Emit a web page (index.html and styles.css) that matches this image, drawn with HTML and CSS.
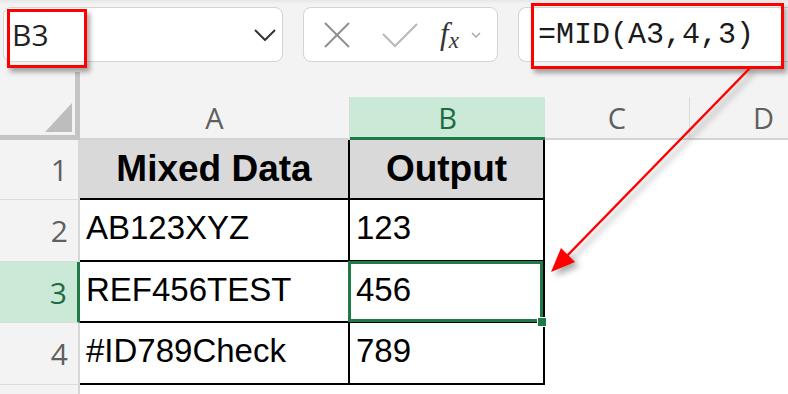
FILE: index.html
```html
<html>

<head>
  <title>MID 函数示例</title>
  <meta charset="utf-8">
  <link rel="stylesheet" href="styles.css">
</head>

<body>
  <div id="toolbar">
    <div class="namebox">
      <span class="ref">B3</span>
      <svg class="drop" viewBox="0 0 22 12"><polyline points="1,1 11,11 21,1" /></svg>
    </div>
    <div class="btns">
      <svg class="cancel" viewBox="0 0 28 28"><line x1="2" y1="2" x2="26" y2="26" /><line x1="26" y1="2" x2="2" y2="26" /></svg>
      <svg class="enter" viewBox="0 0 36 26"><polyline points="1,12 13,24 35,2" /></svg>
      <span class="fx"><i>f</i><em>x</em></span>
      <svg class="more" viewBox="0 0 10 6"><polyline points="1,1 5,5 9,1" /></svg>
    </div>
    <div class="formula">=MID(A3,4,3)</div>
  </div>

  <div id="sheet">
    <div class="corner"><span class="tri"></span></div>
    <div class="col">A</div>
    <div class="col sel">B</div>
    <div class="col">C</div>
    <div class="col cut">D</div>

    <div class="row">1</div>
    <div class="cell head">Mixed Data</div>
    <div class="cell head">Output</div>
    <div class="blank"></div>
    <div class="blank"></div>

    <div class="row">2</div>
    <div class="cell">AB123XYZ</div>
    <div class="cell">123</div>
    <div class="blank"></div>
    <div class="blank"></div>

    <div class="row sel">3</div>
    <div class="cell">REF456TEST</div>
    <div class="cell active">456<span class="handle"></span></div>
    <div class="blank"></div>
    <div class="blank"></div>

    <div class="row">4</div>
    <div class="cell">#ID789Check</div>
    <div class="cell">789</div>
    <div class="blank"></div>
    <div class="blank"></div>

    <div class="row last"></div>
    <div class="blank"></div>
    <div class="blank"></div>
    <div class="blank"></div>
    <div class="blank"></div>
  </div>

  <!-- 红色箭头：公式栏指向 B3 -->
  <svg class="arrow" viewBox="0 0 788 394">
    <line x1="750" y1="68" x2="562" y2="261" />
    <polygon points="551,272 561,248 575,262" />
  </svg>
</body>

</html>
```

FILE: styles.css
```css
* {
  margin: 0;
  padding: 0;
  box-sizing: border-box;
}

body {
  position: relative;
  width: 788px;
  height: 394px;
  overflow: hidden;
  background: #f3f3f3;
  font-family: "Open Sans", "Noto Sans", sans-serif;
}

#toolbar {
  display: flex;
  align-items: flex-start;
  height: 72px;
  padding: 7px 0 0 3px;
  background: linear-gradient(#e6e6e6, #f3f3f3 4px);
}

.namebox,
.btns,
.formula {
  position: relative;
  height: 55px;
  background: #fff;
  border: 1px solid #d4d4d4;
  border-radius: 8px;
  display: flex;
  align-items: center;
}

.namebox {
  width: 280px;
  justify-content: space-between;
  padding: 0 6px 0 8px;
  font-size: 30px;
  color: #222;
}

/* 红色标注框 */
.namebox::before,
.formula::before {
  content: "";
  position: absolute;
  border: 3px solid #ff0000;
  box-shadow: 3px 4px 5px rgba(0, 0, 0, .35);
}

.namebox::before {
  left: 3px;
  top: 1px;
  width: 74px;
  height: 53px;
}

.drop {
  width: 22px;
  height: 12px;
  fill: none;
  stroke: #333;
  stroke-width: 2;
}

.btns {
  width: 195px;
  margin-left: 20px;
  padding-left: 19px;
}

.cancel {
  width: 28px;
  height: 28px;
  stroke: #8f8f8f;
  stroke-width: 2;
}

.enter {
  width: 36px;
  height: 26px;
  margin-left: 31px;
  fill: none;
  stroke: #b8b8b8;
  stroke-width: 2;
}

.fx {
  margin-left: 22px;
  font-family: "Liberation Serif", serif;
  color: #333;
}

.fx i {
  font-size: 31px;
}

.fx em {
  font-size: 23px;
  vertical-align: -4px;
}

.more {
  width: 10px;
  height: 6px;
  margin-left: 12px;
  fill: none;
  stroke: #aaa;
  stroke-width: 1.5;
}

/* 公式栏右侧被截断 */
.formula {
  flex: 1;
  margin-left: 20px;
  padding-left: 19px;
  border-right: none;
  border-radius: 8px 0 0 8px;
  font-family: "Liberation Mono", monospace;
  font-size: 30px;
  color: #1a1a1a;
}

.formula::before {
  left: 12px;
  top: -5px;
  width: 247px;
  height: 60px;
}

#sheet {
  display: grid;
  grid-template-columns: 80px 270px 195px 145px 1fr;
  grid-template-rows: 68px 60px 62px 61px 62px 1fr;
  height: 322px;
}

.corner {
  display: flex;
  align-items: flex-end;
  justify-content: flex-end;
  padding: 0 3px 3px 0;
  border-right: 5px solid #c4c4c4;
  border-bottom: 5px solid #c4c4c4;
}

.tri {
  width: 27px;
  height: 29px;
  background: #bdbdbd;
  clip-path: polygon(100% 0, 100% 100%, 0 100%);
}

.col {
  margin-top: 25px;
  display: flex;
  align-items: center;
  justify-content: center;
  border-right: 1px solid #dadada;
  border-bottom: 2px solid #d4d4d4;
  font-size: 29px;
  color: #5f5f5f;
}

.col.cut {
  justify-content: flex-start;
  padding-left: 63px;
  border-right: none;
}

.col.sel {
  background: #caead7;
  color: #1d6b42;
  border-right: none;
  border-bottom: 3px solid #1f7a48;
}

.row {
  display: flex;
  align-items: center;
  justify-content: flex-end;
  padding-right: 10px;
  border-right: 2px solid #d6d6d6;
  border-bottom: 1px solid #dcdcdc;
  font-size: 30px;
  color: #5f5f5f;
}

.row.sel {
  background: #caead7;
  color: #1d6b42;
  border-right: 3px solid #1f7a48;
}

.row.last {
  border-bottom: none;
}

.cell {
  position: relative;
  display: flex;
  align-items: center;
  padding: 0 0 4px 6px;
  background: #fff;
  border-right: 2px solid #000;
  border-bottom: 2px solid #000;
  font-family: "Liberation Sans", Arial, sans-serif;
  font-size: 33px;
  color: #000;
}

.cell.head {
  justify-content: center;
  padding: 0;
  background: #d9d9d9;
  font-size: 37px;
  font-weight: bold;
}

/* 选中单元格 */
.cell.active::after {
  content: "";
  position: absolute;
  left: -2px;
  top: -1px;
  right: 0;
  bottom: -1px;
  border: 3px solid #1f7a48;
}

.handle {
  position: absolute;
  right: -4px;
  bottom: -6px;
  width: 10px;
  height: 10px;
  background: #1f7a48;
  border: 1px solid #fff;
  z-index: 1;
}

.blank {
  background: #fff;
}

.arrow {
  position: absolute;
  left: 0;
  top: 0;
  width: 788px;
  height: 394px;
  filter: drop-shadow(4px 4px 3px rgba(0, 0, 0, .35));
}

.arrow line {
  stroke: #ff0000;
  stroke-width: 2.5;
}

.arrow polygon {
  fill: #ff0000;
}
```
